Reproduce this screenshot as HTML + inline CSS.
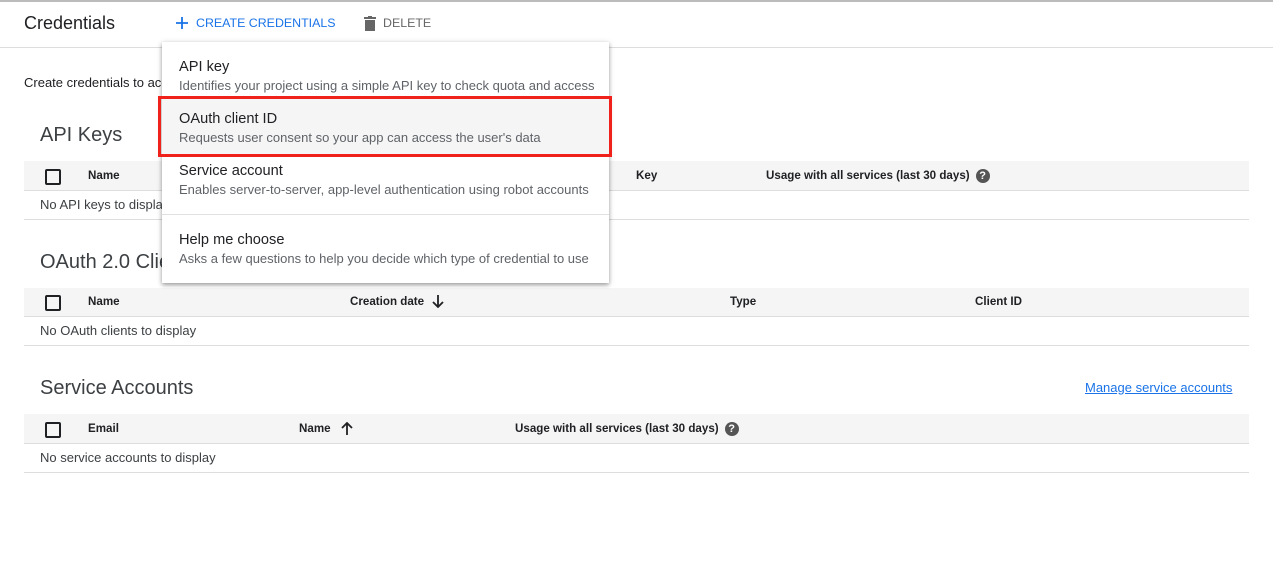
<!DOCTYPE html>
<html><head><style>
body{margin:0;width:1273px;height:565px;overflow:hidden;background:#fff;font-family:"Liberation Sans",Arial,sans-serif;color:#202124;position:relative}
.a{position:absolute;white-space:nowrap}
.hdr{position:absolute;left:24px;width:1225px;background:#f5f5f5;border-bottom:1px solid #ddd}
.line{position:absolute;left:24px;width:1225px;height:1px;background:#ddd}
.th{position:absolute;font-size:11.6px;font-weight:bold;color:#202124}
.cb{position:absolute;left:45px;width:12px;height:12px;border:2px solid #202124;border-radius:2px}
.h2{position:absolute;left:40px;font-size:20px;color:#3c4043}
.empty{position:absolute;left:40px;font-size:13px;color:#3c4043}
.q{display:inline-block;width:14px;height:14px;border-radius:50%;background:#555;color:#fff;font-size:11px;text-align:center;line-height:14px;font-weight:bold;vertical-align:0px;margin-left:6px}
.menu{position:absolute;left:162px;top:42px;width:447px;height:241px;background:#fff;box-shadow:0 2px 4px rgba(0,0,0,.3),0 1px 6px rgba(0,0,0,.15)}
.mt{position:absolute;left:17px;font-size:14.6px;color:#202124}
.md{position:absolute;left:17px;font-size:13px;color:#5f6368}
</style></head><body>
<div class="a" style="left:0;top:0;width:1273px;height:2px;background:#bbb"></div>
<div class="a" style="left:24px;top:13px;font-size:18px">Credentials</div>
<svg class="a" style="left:176px;top:17px" width="12" height="12" viewBox="0 0 12 12"><path d="M6 0V12M0 6H12" stroke="#1a73e8" stroke-width="1.8"/></svg>
<div class="a" style="left:196px;top:16px;font-size:12.4px;color:#1a73e8">CREATE CREDENTIALS</div>
<svg class="a" style="left:364px;top:16px" width="12" height="15" viewBox="0 0 12 15"><rect x="0" y="1" width="12" height="2" fill="#666"/><rect x="4" y="0" width="4" height="2" fill="#666"/><rect x="1" y="4" width="10" height="11" fill="#666"/></svg>
<div class="a" style="left:383px;top:16px;font-size:12.4px;color:#666">DELETE</div>
<div class="a" style="left:0;top:47px;width:1273px;height:1px;background:#ddd"></div>
<div class="a" style="left:24px;top:75px;font-size:13px">Create credentials to access your enabled APIs</div>

<div class="h2" style="top:124px">API Keys</div>
<div class="hdr" style="top:161px;height:29px"></div>
<div class="cb" style="top:169px"></div>
<div class="th" style="left:88px;top:169px">Name</div>
<div class="th" style="left:636px;top:169px">Key</div>
<div class="th" style="left:766px;top:169px">Usage with all services (last 30 days)<span class="q">?</span></div>
<div class="empty" style="top:197px">No API keys to display</div>
<div class="line" style="top:219px"></div>

<div class="h2" style="top:251px">OAuth 2.0 Client IDs</div>
<div class="hdr" style="top:288px;height:28px"></div>
<div class="cb" style="top:295px"></div>
<div class="th" style="left:88px;top:295px">Name</div>
<div class="th" style="left:350px;top:295px">Creation date</div>
<svg class="a" style="left:432px;top:295px" width="12" height="13" viewBox="0 0 12 13"><path d="M6 0V12M1 7L6 12L11 7" stroke="#202124" stroke-width="1.8" fill="none"/></svg>
<div class="th" style="left:730px;top:295px">Type</div>
<div class="th" style="left:975px;top:295px">Client ID</div>
<div class="empty" style="top:323px">No OAuth clients to display</div>
<div class="line" style="top:345px"></div>

<div class="h2" style="top:377px">Service Accounts</div>
<div class="a" style="left:1085px;top:380px;font-size:13px;color:#1a73e8;text-decoration:underline">Manage service accounts</div>
<div class="hdr" style="top:414px;height:29px"></div>
<div class="cb" style="top:422px"></div>
<div class="th" style="left:88px;top:422px">Email</div>
<div class="th" style="left:299px;top:422px">Name</div>
<svg class="a" style="left:341px;top:422px" width="12" height="13" viewBox="0 0 12 13"><path d="M6 13V1M1 6L6 1L11 6" stroke="#202124" stroke-width="1.8" fill="none"/></svg>
<div class="th" style="left:515px;top:422px">Usage with all services (last 30 days)<span class="q">?</span></div>
<div class="empty" style="top:450px">No service accounts to display</div>
<div class="line" style="top:472px"></div>

<div class="menu">
<div class="mt" style="top:17px">API key</div>
<div class="md" style="top:36px">Identifies your project using a simple API key to check quota and access</div>
<div class="a" style="left:0;top:56px;width:447px;height:58px;background:#f5f5f5"></div>
<div class="mt" style="top:69px">OAuth client ID</div>
<div class="md" style="top:88px">Requests user consent so your app can access the user's data</div>
<div class="mt" style="top:121px">Service account</div>
<div class="md" style="top:140px">Enables server-to-server, app-level authentication using robot accounts</div>
<div class="a" style="left:0;top:172px;width:447px;height:1px;background:#e0e0e0"></div>
<div class="mt" style="top:190px">Help me choose</div>
<div class="md" style="top:209px">Asks a few questions to help you decide which type of credential to use</div>
</div>
<div class="a" style="left:158px;top:96px;width:448px;height:55px;border:3px solid #f0211b"></div>
</body></html>
